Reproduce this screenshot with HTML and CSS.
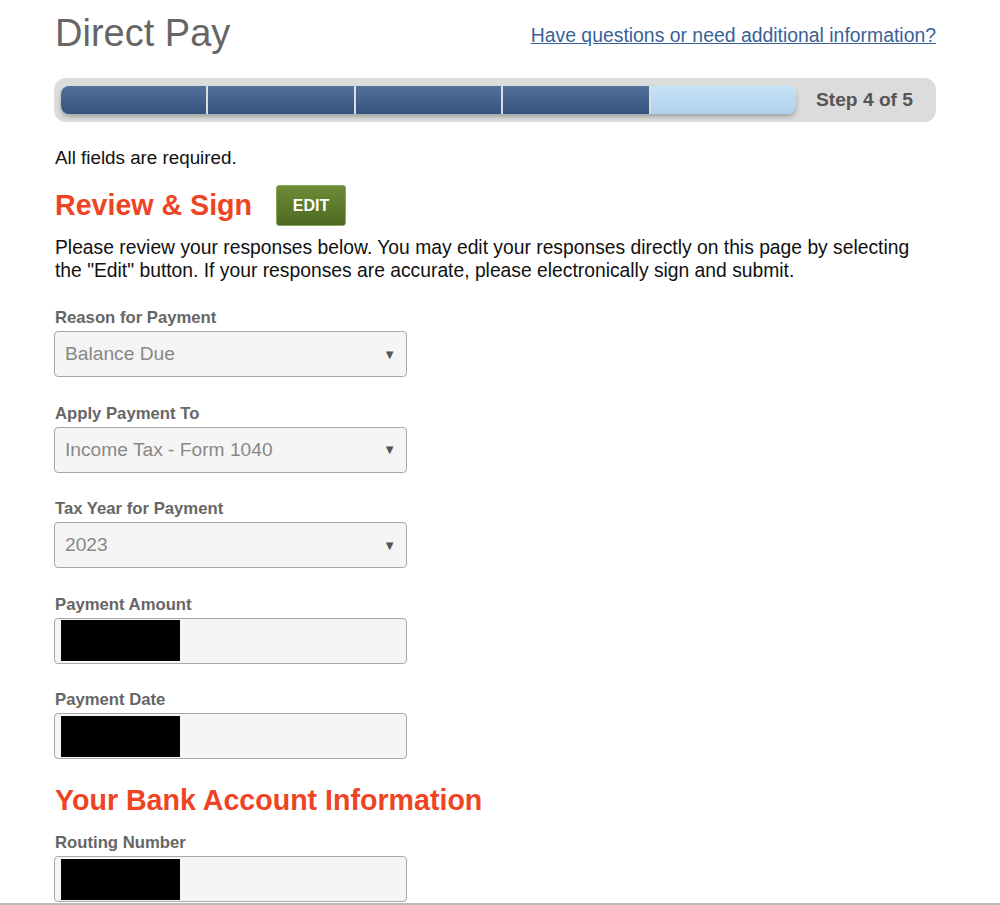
FILE: index.html
```html
<!DOCTYPE html>
<html lang="en">
  <head>
    <meta charset="UTF-8" />
    <title>Direct Pay</title>
    <link rel="stylesheet" href="styles.css">
  </head>
  <body>
    <div class="page">
      <div class="header">
        <h1 class="title">Direct Pay</h1>
        <a class="help-link" href="#">Have questions or need additional information?</a>
      </div>
      <div class="progress">
        <div class="progress-bar">
          <div class="seg done"></div>
          <div class="seg done"></div>
          <div class="seg done"></div>
          <div class="seg done"></div>
          <div class="seg todo"></div>
        </div>
        <span class="step">Step 4 of 5</span>
      </div>
      <p class="required">All fields are required.</p>
      <div class="section-head">
        <h2 class="section-title">Review &amp; Sign</h2>
        <button class="edit-btn">EDIT</button>
      </div>
      <p class="intro">Please review your responses below. You may edit your responses directly on this page by selecting the "Edit" button. If your responses are accurate, please electronically sign and submit.</p>

      <div class="field">
        <label class="label">Reason for Payment</label>
        <div class="box select">Balance Due<span class="arrow">&#9660;</span></div>
      </div>
      <div class="field">
        <label class="label">Apply Payment To</label>
        <div class="box select">Income Tax - Form 1040<span class="arrow">&#9660;</span></div>
      </div>
      <div class="field">
        <label class="label">Tax Year for Payment</label>
        <div class="box select">2023<span class="arrow">&#9660;</span></div>
      </div>
      <div class="field">
        <label class="label">Payment Amount</label>
        <div class="box"><span class="redact"></span></div>
      </div>
      <div class="field">
        <label class="label">Payment Date</label>
        <div class="box"><span class="redact"></span></div>
      </div>

      <h2 class="section-title bank">Your Bank Account Information</h2>
      <div class="field first">
        <label class="label">Routing Number</label>
        <div class="box"><span class="redact"></span></div>
      </div>
    </div>
    <div class="edge"></div>
  </body>
</html>
```

FILE: styles.css
```css
body {
  font-family: "Liberation Sans", Arial, sans-serif;
  background-color: white;
  color: #111;
  margin: 0;
  padding: 0;
}
.page {
  width: 882px;
  padding: 0 0 0 54px;
}
.header {
  display: flex;
  justify-content: space-between;
  align-items: center;
  height: 70px;
  padding-bottom: 8px;
}
.title {
  margin: 0 0 0 1px;
  font-size: 38px;
  font-weight: normal;
  color: #666;
  padding-bottom: 4px;
}
.help-link {
  color: #3a6197;
  font-size: 19.4px;
  padding-bottom: 0;
}
.progress {
  display: flex;
  align-items: center;
  height: 44px;
  background-color: #dcdcdc;
  border-radius: 12px;
  padding: 0 23px 0 7px;
}
.progress-bar {
  display: flex;
  width: 735px;
  height: 28px;
  gap: 2px;
  border-radius: 8px;
  overflow: hidden;
  box-shadow: 0 3px 4px rgba(0, 0, 0, 0.25);
}
.seg {
  flex: 1;
}
.seg.done {
  background: linear-gradient(#52719a, #34527f);
}
.seg.todo {
  background: linear-gradient(#c6e4f6, #afcfee);
}
.step {
  margin-left: auto;
  font-size: 19.2px;
  font-weight: bold;
  color: #555;
}
.required {
  margin: 25px 0 0 1px;
  font-size: 18.8px;
}
.section-head {
  display: flex;
  align-items: center;
  margin-top: 16px;
}
.section-title {
  margin: 0 0 0 1px;
  font-size: 28.6px;
  font-weight: bold;
  color: #ee4423;
}
.edit-btn {
  margin-left: 24px;
  width: 70px;
  height: 41px;
  background: linear-gradient(#6c8b36, #4e6a22);
  border: 1px solid #8aa85a;
  border-radius: 3px;
  color: white;
  font-family: "Liberation Sans", Arial, sans-serif;
  font-size: 16px;
  font-weight: bold;
}
.intro {
  margin: 10px 0 0 1px;
  font-size: 19.3px;
  line-height: 23px;
  width: 870px;
}
.field {
  margin-top: 27px;
}
.field + .field {
  margin-top: 27.5px;
}
.label {
  display: block;
  margin-left: 1px;
  font-size: 16.7px;
  font-weight: bold;
  color: #666;
  line-height: 18px;
  margin-bottom: 4px;
}
.box {
  display: flex;
  align-items: center;
  box-sizing: border-box;
  width: 353px;
  height: 46px;
  background-color: #f5f5f5;
  border: 1px solid #a8a8a8;
  border-radius: 4px;
  padding: 0 6px;
}
.select {
  padding: 0 10px;
  font-size: 19.2px;
  color: #888;
}
.arrow {
  margin-left: auto;
  font-size: 13px;
  color: #555;
  margin-right: 0;
}
.redact {
  width: 119px;
  height: 41px;
  background-color: black;
}
.bank {
  margin-top: 25px;
}
.field.first {
  margin-top: 17px;
}
.edge {
  position: fixed;
  left: 0;
  right: 0;
  bottom: 0;
  height: 2px;
  background-color: #bbb;
}
```
